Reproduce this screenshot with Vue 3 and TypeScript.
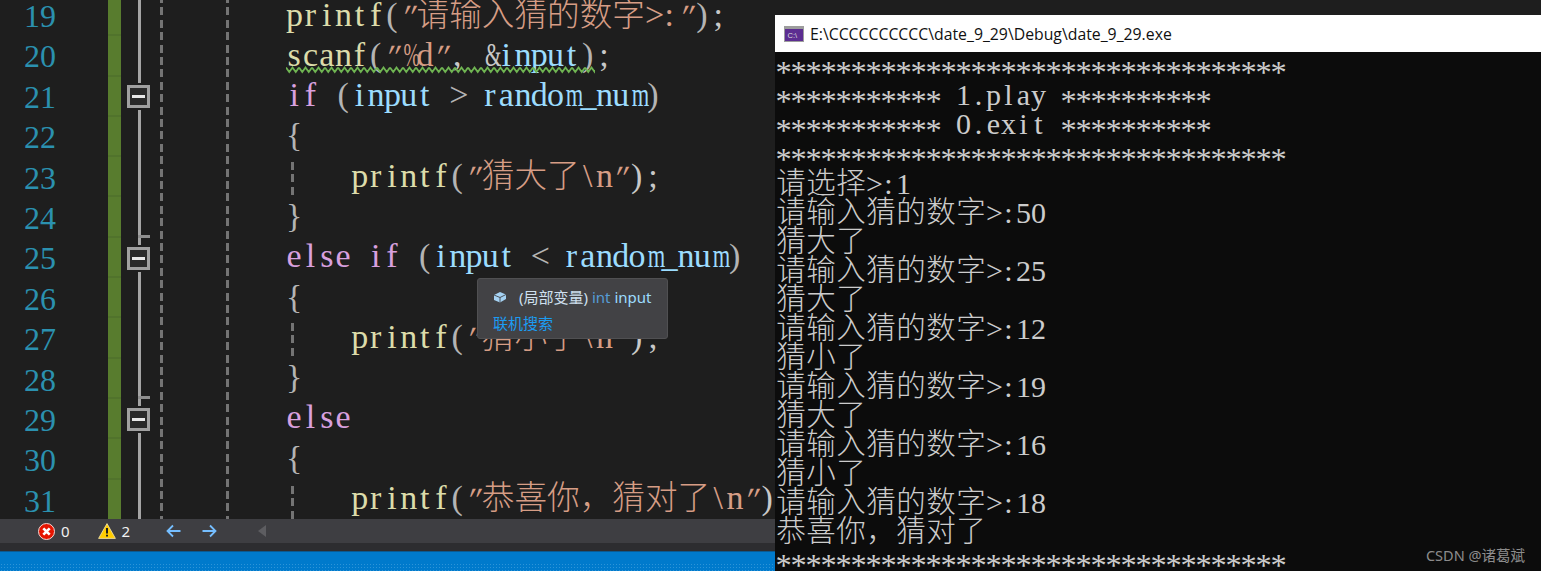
<script setup lang="ts">
type Tok = [string, string]

interface Cell { ch: string; cls: string }

const wideGlyphs: Record<string, string> = { m: 'sq-m', '%': 'sq-p', '&': 'sq-a', _: 'sq-u' }

function cells(text: string): Cell[] {
  return Array.from(text).map((ch) => {
    if (/[\u3000-\u9fff\uff00-\uffef]/.test(ch)) return { ch, cls: 'cell han' }
    if (ch === '"') return { ch, cls: 'cell quote' }
    if (ch === '*') return { ch, cls: 'cell star' }
    return { ch, cls: 'cell ' + (wideGlyphs[ch] ?? '') }
  })
}

const codeLines: { n: number; toks: Tok[] }[] = [
  { n: 19, toks: [['printf', 'fn'], ['(', 'pn'], ['"请输入猜的数字>:"', 'st'], [')', 'pn'], [';', 'sm']] },
  { n: 20, toks: [['scanf', 'fn'], ['(', 'pn'], ['"%d"', 'st'], [', &', 'sm'], ['input', 'va'], [')', 'pn'], [';', 'sm']] },
  { n: 21, toks: [['if', 'kw'], [' (', 'pn'], ['input', 'va'], [' > ', 'pn'], ['random_num', 'va'], [')', 'pn']] },
  { n: 22, toks: [['{', 'pn']] },
  { n: 23, toks: [['    ', ''], ['printf', 'fn'], ['(', 'pn'], ['"猜大了\\n"', 'st'], [');', 'sm']] },
  { n: 24, toks: [['}', 'pn']] },
  { n: 25, toks: [['else if', 'kw'], [' (', 'pn'], ['input', 'va'], [' < ', 'pn'], ['random_num', 'va'], [')', 'pn']] },
  { n: 26, toks: [['{', 'pn']] },
  { n: 27, toks: [['    ', ''], ['printf', 'fn'], ['(', 'pn'], ['"猜小了\\n"', 'st'], [');', 'sm']] },
  { n: 28, toks: [['}', 'pn']] },
  { n: 29, toks: [['else', 'kw']] },
  { n: 30, toks: [['{', 'pn']] },
  { n: 31, toks: [['    ', ''], ['printf', 'fn'], ['(', 'pn'], ['"恭喜你，猜对了\\n"', 'st'], [');', 'sm']] }
]

const stars = '*'.repeat(34)
const consoleLines: string[] = [
  stars,
  '*********** 1.play **********',
  '*********** 0.exit **********',
  stars,
  '请选择>:1',
  '请输入猜的数字>:50',
  '猜大了',
  '请输入猜的数字>:25',
  '猜大了',
  '请输入猜的数字>:12',
  '猜小了',
  '请输入猜的数字>:19',
  '猜大了',
  '请输入猜的数字>:16',
  '猜小了',
  '请输入猜的数字>:18',
  '恭喜你，猜对了',
  stars
]

const folds = [21, 25, 29]
</script>

<template>
  <div class="screen">
    <section class="ide">
      <div class="editor">
        <div class="numbers">
          <div v-for="l in codeLines" :key="l.n" class="num">{{ l.n }}</div>
        </div>
        <div class="gutter"></div>
        <div class="margin">
          <div class="spine"></div>
          <div v-for="n in folds" :key="n" class="fold-row" :class="'fold-' + n">
            <span class="fold"><i></i></span>
          </div>
          <span class="hook hook-a"></span>
          <span class="hook hook-b"></span>
        </div>
        <div class="code">
          <div v-for="l in codeLines" :key="l.n" class="line">
            <span v-for="(t, i) in l.toks" :key="i" :class="t[1]"><span
              v-for="(c, j) in cells(t[0])" :key="j" :class="c.cls">{{ c.ch }}</span></span><svg
              v-if="l.n === 20" class="squiggle" width="309" height="8" viewBox="0 0 309 8">
              <defs>
                <pattern id="wv" width="13" height="8" patternUnits="userSpaceOnUse">
                  <path d="M0 1.5 L3.25 6 L6.5 1.5 L9.75 6 L13 1.5" fill="none" stroke="#6fb552" stroke-width="1.8" />
                </pattern>
              </defs>
              <rect width="309" height="8" fill="url(#wv)" />
            </svg>
          </div>
          <span class="guide g1"></span>
          <span class="guide g2"></span>
          <span class="guide g3"></span>
          <span class="guide g4"></span>
          <span class="guide g5"></span>
        </div>
        <div class="tip">
          <div class="tip-head">
            <svg class="cube" width="14" height="14" viewBox="0 0 14 14">
              <path d="M1 5 L7 2 L13 4.5 L13 9 L7 12.5 L1 10 Z" fill="#a5d2f3" />
              <path d="M1 5 L7 7.5 L13 4.5 M7 7.5 V12.5" fill="none" stroke="#424245" stroke-width="0.9" />
            </svg>
            <span class="tip-sig">(局部变量) <em class="tk">int</em> <em class="tv">input</em></span>
          </div>
          <div class="tip-link">联机搜索</div>
        </div>
      </div>
      <div class="status">
        <span class="stat err">
          <svg width="17" height="17" viewBox="0 0 17 17">
            <circle cx="8.5" cy="8.5" r="8" fill="#e51400" stroke="#f4d6d2" stroke-width="1" />
            <path d="M5.3 5.3 L11.7 11.7 M11.7 5.3 L5.3 11.7" stroke="#fff" stroke-width="2.6" />
          </svg>
          <b>0</b>
        </span>
        <span class="stat warn">
          <svg width="18" height="16" viewBox="0 0 18 16">
            <path d="M9 0.6 L17.4 15.4 H0.6 Z" fill="#ffcc00" stroke="#f7e9b0" stroke-width="0.8" stroke-linejoin="round" />
            <path d="M9 5 V10.5 M9 11.7 V13.6" stroke="#1e1e1e" stroke-width="2" />
          </svg>
          <b>2</b>
        </span>
        <span class="arrows">
          <svg width="15" height="14" viewBox="0 0 15 14">
            <path d="M14.5 7 H1.5 M7 1.5 L1.5 7 L7 12.5" fill="none" stroke="#75beff" stroke-width="1.8" />
          </svg>
          <svg width="15" height="14" viewBox="0 0 15 14">
            <path d="M0.5 7 H13.5 M8 1.5 L13.5 7 L8 12.5" fill="none" stroke="#75beff" stroke-width="1.8" />
          </svg>
        </span>
        <svg class="left" width="8" height="12" viewBox="0 0 8 12"><path d="M8 0 V12 L0 6 Z" fill="#5d5d61" /></svg>
      </div>
      <div class="strip"></div>
      <div class="blue"><div class="dots"></div></div>
    </section>

    <section class="term">
      <div class="term-top"></div>
      <div class="title">
        <svg width="20" height="16" viewBox="0 0 20 16">
          <rect width="20" height="16" fill="#9d9d9d" />
          <rect x="1" y="3" width="18" height="12" fill="#5c2d91" />
          <text x="3.5" y="12" font-size="7.5" font-family="Liberation Sans" fill="#ddd">C:\</text>
        </svg>
        <span>E:\CCCCCCCCCC\date_9_29\Debug\date_9_29.exe</span>
      </div>
      <div class="body">
        <div v-for="(l, i) in consoleLines" :key="i" class="row"><span
          v-for="(c, j) in cells(l)" :key="j" :class="c.cls">{{ c.ch }}</span></div>
        <div class="mark">CSDN @诸葛斌</div>
      </div>
    </section>
  </div>
</template>

<style>
html, body { margin: 0; background: #1e1e1e; overflow: hidden; }
</style>

<style scoped>
.screen { display: flex; width: 1541px; height: 571px; overflow: hidden; background: #1e1e1e; }

.ide { width: 775px; flex: none; display: flex; flex-direction: column; }
.editor { position: relative; height: 519px; flex: none; display: flex; overflow: hidden; background: #1e1e1e; }

.numbers { width: 108px; flex: none; margin-top: -4px; }
.num { height: 40.4px; padding-left: 24px; font: 32px/40.4px "Liberation Serif", serif; color: #2b91af; }
.gutter {
  width: 13px; flex: none;
  background: repeating-linear-gradient(180deg, #587c2e 0, #587c2e 39.3px, #4a6a2a 39.3px, #4a6a2a 40.3px);
  background-position: 0 -4.5px;
}
.margin { position: relative; width: 165px; flex: none; }
.spine { position: absolute; left: 17px; top: 0; bottom: 0; width: 3px; background: #a5a5a5; }
.fold-row { position: absolute; left: 6px; }
.fold-21 { top: 83px; }
.fold-25 { top: 245px; }
.fold-29 { top: 406px; }
.fold { display: block; padding: 2px 0; background: #1e1e1e; }
.fold i {
  display: flex; align-items: center; justify-content: center;
  box-sizing: border-box; width: 23px; height: 23px;
  border: 3px solid #a0a0a0; background: #2a2a2a;
}
.fold i::after { content: ""; width: 13px; height: 3px; background: #e8e8e8; }
.hook { position: absolute; left: 17px; width: 12px; height: 3px; background: #8f8f8f; }
.hook-a { top: 235px; }
.hook-b { top: 396px; }

.code { position: relative; flex: 1; margin-top: -5.5px; white-space: pre; }
.line { position: relative; height: 40.3px; font: 34px/40.3px "Liberation Serif", serif; }
.code .cell { width: 16.32px; }
.code .han { width: 32.64px; font-size: 32.64px; line-height: 1; }
.cell { display: inline-block; text-align: center; }
.han { font-family: "Noto Sans CJK SC", sans-serif; font-weight: 300; }
.quote { transform: skewX(-24deg) translateY(2px); }
.sq-m { transform: scaleX(0.66); }
.sq-p { transform: scaleX(0.58); }
.sq-a { transform: scaleX(0.62); }
.sq-u { transform: scaleX(0.95); }
.fn { color: #dcdcaa; }
.pn { color: #b4b4b4; }
.st { color: #d69d85; }
.sm { color: #c8c8c8; }
.va { color: #9cdcfe; }
.kw { color: #d8a0df; }
.squiggle { position: absolute; left: 0; top: 31px; }

.guide { position: absolute; width: 3px; background: repeating-linear-gradient(180deg, #747474 0, #747474 8px, transparent 8px, transparent 12.4px); }
.g1 { left: -126px; top: 0; bottom: 0; }
.g2 { left: -60px; top: 0; bottom: 0; }
.g3 { left: 5px; top: 167px; height: 36px; }
.g4 { left: 5px; top: 328px; height: 36px; }
.g5 { left: 5px; top: 491px; height: 40px; }

.tip {
  position: absolute; left: 477px; top: 278px; width: 191px; height: 61px; box-sizing: border-box;
  padding: 8px 15px 0; background: #424245; border: 1px solid #505052; border-radius: 3px;
  font-family: "Noto Sans", "Noto Sans CJK SC", sans-serif; font-size: 15px; line-height: 20px;
}
.tip-head { display: flex; align-items: center; gap: 12px; }
.tip-sig { color: #cfe0ef; white-space: pre; }
.tip-sig em { font-style: normal; }
.tk { color: #569cd6; }
.tv { color: #9cdcfe; }
.tip-link { color: #1b9cf2; margin-top: 6px; }

.status {
  height: 24px; flex: none; background: #3e3e42;
  display: flex; align-items: center; padding-left: 38px; box-sizing: border-box;
  font: 15px "Noto Sans", sans-serif; color: #f1f1f1;
}
.status b { font-weight: 400; }
.stat { display: inline-flex; align-items: center; gap: 6px; }
.warn { margin-left: 28px; }
.arrows { display: inline-flex; gap: 21px; margin-left: 36px; }
.left { margin-left: 41px; }
.strip { height: 8px; flex: none; background: #2d2d30; }
.blue { flex: 1; background: #007acc; display: flex; flex-direction: column; justify-content: flex-end; border-top: 1px solid #0b5a92; }
.dots {
  height: 8px;
  background-image: radial-gradient(circle, #2d94d8 0.8px, transparent 1px);
  background-size: 3px 3px;
}

.term { flex: 1; display: flex; flex-direction: column; min-width: 0; }
.term-top { height: 15px; flex: none; background: #1e1e1e; }
.title {
  height: 37px; flex: none; display: flex; align-items: center; gap: 6px; padding-left: 9px; background: #fff; color: #111;
  font: 15.8px "Open Sans", "Noto Sans", sans-serif;
}
.body { position: relative; flex: 1; background: #0c0c0c; color: #cccccc; padding: 0 0 0 1px; overflow: hidden; white-space: pre; }
.row { height: 29px; font: 30px/25px "Liberation Serif", serif; }
.row .cell { width: 15px; }
.row .cell:not(.han) { transform: translateY(1px); }
.row .han { width: 30px; font-size: 29.5px; }
.row .cell.star { transform: translateY(7.5px) scale(1.08); }
.mark { position: absolute; right: 16px; top: 492px; font: 14.5px "Noto Sans", "Noto Sans CJK SC", sans-serif; color: #8c8c8c; }
</style>
